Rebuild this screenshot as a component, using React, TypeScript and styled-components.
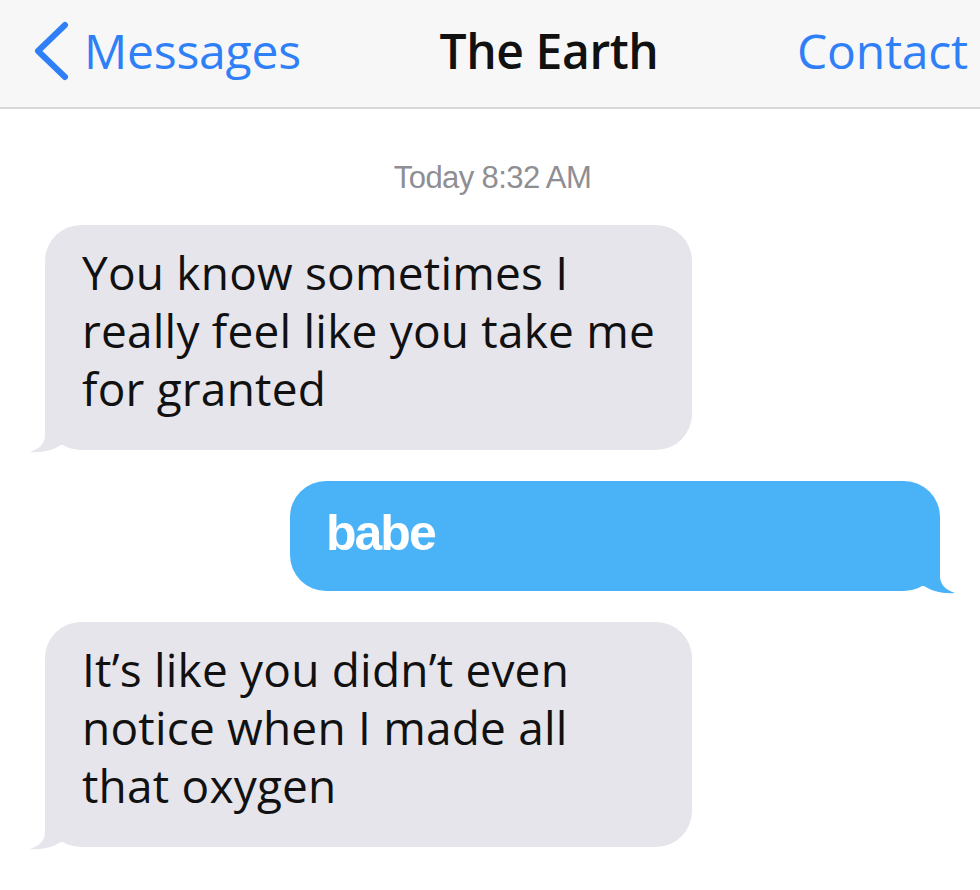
import React from "react";
import styled, { createGlobalStyle } from "styled-components";

const GlobalStyle = createGlobalStyle`
  html, body {
    margin: 0;
    padding: 0;
    background: #ffffff;
  }
  body {
    font-family: "Open Sans", "Liberation Sans", sans-serif;
  }
`;

const Screen = styled.div`
  width: 980px;
  height: 890px;
  overflow: hidden;
  background: #ffffff;
`;

const NavBar = styled.header`
  height: 109px;
  display: flex;
  align-items: center;
  justify-content: space-between;
  padding: 0 12px 6px 32px;
  box-sizing: border-box;
  background: #f7f7f7;
  border-bottom: 2px solid #d9d9d9;
  font-size: 48px;
  line-height: 1;
`;

const BackButton = styled.div`
  display: flex;
  align-items: center;
  gap: 14px;
  color: #2f7ff7;
`;

const NavLink = styled.span`
  color: #2f7ff7;
  letter-spacing: -0.2px;
`;

const Title = styled.span`
  color: #111111;
  font-weight: 600;
  letter-spacing: -0.4px;
`;

const Thread = styled.div`
  display: flex;
  flex-direction: column;
  padding: 0 40px 0 45px;
`;

const Timestamp = styled.div`
  margin: 53px 0 32px;
  text-align: center;
  font-family: "Liberation Sans", Arial, sans-serif;
  font-size: 31px;
  letter-spacing: -0.6px;
  line-height: 1;
  color: #8e8e93;
`;

const Bubble = styled.div<{ $mine?: boolean }>`
  position: relative;
  box-sizing: border-box;
  border-radius: 36px;
  align-self: ${(p) => (p.$mine ? "flex-end" : "flex-start")};
  background: ${(p) => (p.$mine ? "#4ab3f8" : "#e6e5eb")};
  color: ${(p) => (p.$mine ? "#ffffff" : "#111111")};
  margin-bottom: 31px;
`;

const IncomingText = styled.div`
  width: 647px;
  padding: 18px 30px 33px 37px;
  box-sizing: border-box;
  font-size: 46px;
  line-height: 58px;
  letter-spacing: 0.2px;
`;

const OutgoingText = styled.div`
  width: 650px;
  height: 110px;
  padding: 0 36px 6px;
  box-sizing: border-box;
  display: flex;
  align-items: center;
  font-family: "Liberation Sans", Arial, sans-serif;
  font-weight: 700;
  font-size: 50px;
  letter-spacing: -2px;
`;

const Tail = styled.svg<{ $mine?: boolean }>`
  position: absolute;
  bottom: -3px;
  width: 50px;
  height: 56px;
  ${(p) => (p.$mine ? "right: -16px; transform: scaleX(-1);" : "left: -16px;")}
`;

const BubbleTail = ({ mine, color }: { mine?: boolean; color: string }) => (
  <Tail $mine={mine} viewBox="0 0 50 56">
    <path
      d="M16 0 L16 38 C16 47 10 52 1 55 C14 56 24 53 32 48 L50 48 L50 0 Z"
      fill={color}
    />
  </Tail>
);

const messages = [
  {
    mine: false,
    lines: ["You know sometimes I", "really feel like you take me", "for granted"],
  },
  { mine: true, lines: ["babe"] },
  {
    mine: false,
    lines: [
      "It\u2019s like you didn\u2019t even",
      "notice when I made all",
      "that oxygen",
    ],
  },
];

export default function App() {
  return (
    <Screen>
      <GlobalStyle />
      <NavBar>
        <BackButton>
          <svg width="38" height="60" viewBox="0 0 38 60">
            <path
              d="M33 4 L6 30 L33 56"
              fill="none"
              stroke="#2f7ff7"
              strokeWidth="6"
              strokeLinecap="round"
              strokeLinejoin="round"
            />
          </svg>
          <NavLink>Messages</NavLink>
        </BackButton>
        <Title>The Earth</Title>
        <NavLink>Contact</NavLink>
      </NavBar>
      <Thread>
        <Timestamp>Today 8:32 AM</Timestamp>
        {messages.map((m, i) => (
          <Bubble key={i} $mine={m.mine}>
            {m.mine ? (
              <OutgoingText>{m.lines[0]}</OutgoingText>
            ) : (
              <IncomingText>
                {m.lines.map((line, j) => (
                  <div key={j}>{line}</div>
                ))}
              </IncomingText>
            )}
            <BubbleTail mine={m.mine} color={m.mine ? "#4ab3f8" : "#e6e5eb"} />
          </Bubble>
        ))}
      </Thread>
    </Screen>
  );
}
